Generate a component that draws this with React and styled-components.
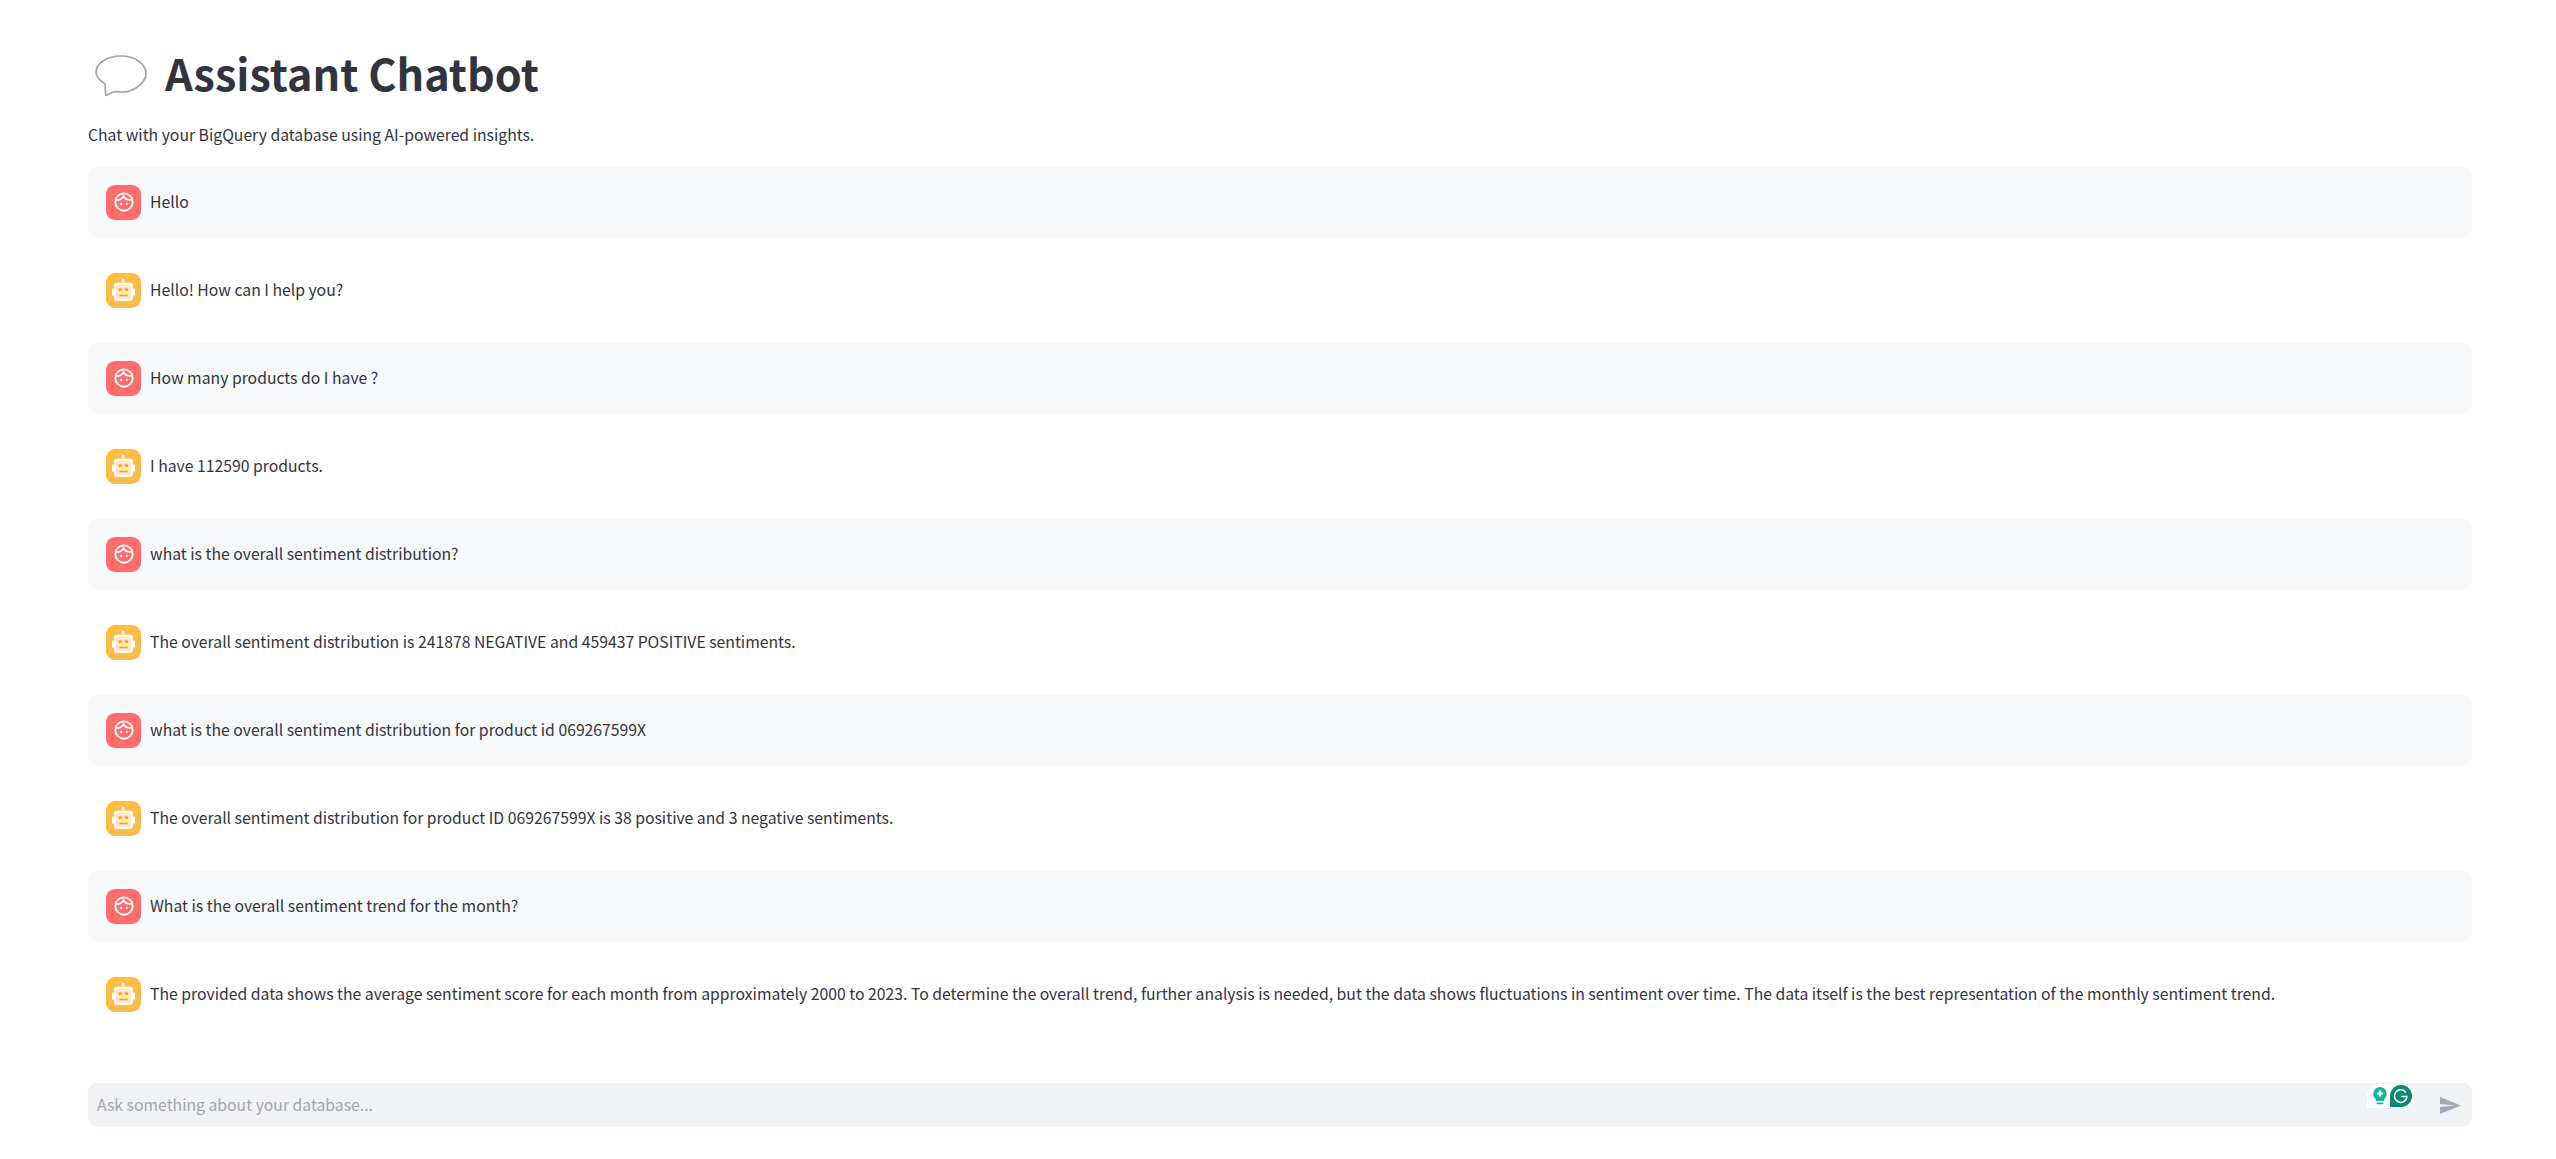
import React from "react";
import styled, { createGlobalStyle } from "styled-components";

const Global = createGlobalStyle`
  html, body { margin: 0; padding: 0; background: #fff; }
  body { font-family: "Noto Sans CJK SC", "Noto Sans", sans-serif; color: #31333f; }
`;
const Page = styled.main`
  width: 2556px; height: 1159px; box-sizing: border-box; overflow: hidden;
  padding: 42px 84px 0 88px; display: flex; flex-direction: column;
`;
const TitleRow = styled.header`
  display: flex; align-items: center; gap: 18px; height: 68px; padding-left: 7px;
`;
const Title = styled.h1`
  margin: 0; font-size: 43.2px; font-weight: 700; line-height: 60px; height: 68px; color: #31333f;
`;
const Subtitle = styled.p`
  margin: 11px 0 0; font-size: 15.75px; line-height: 28px; height: 29px; color: #31333f;
`;
const Messages = styled.section`
  display: flex; flex-direction: column; gap: 18px; margin-top: 17px;
`;
const Message = styled.article`
  display: flex; align-items: center; gap: 9px; height: 70px; box-sizing: border-box;
  padding: 0 18px; border-radius: 9px;
  background: ${(p) => (p.$user ? "#f7f8fa" : "transparent")};
`;
const Avatar = styled.div`
  width: 35px; height: 35px; flex: none; border-radius: 9px; display: flex;
  align-items: center; justify-content: center;
  background: ${(p) => (p.$user ? "#ff6c6c" : "#ffbd45")};
`;
const Text = styled.p`
  margin: 0; font-size: 15.75px; line-height: 28px; color: #31333f; white-space: nowrap;
`;
const InputBar = styled.form`
  position: relative; display: flex; align-items: center; justify-content: space-between;
  margin-top: 54px; height: 44px; border-radius: 9px; background: #f0f2f6; padding: 0 9px;
`;
const Placeholder = styled.span`
  font-size: 15.75px; color: #a3a5ad; line-height: 28px;
`;
const SendButton = styled.button`
  border: 0; background: none; padding: 0; margin: 0 2px 0 0; display: flex; cursor: pointer;
`;
const Grammarly = styled.div`
  position: absolute; right: 58px; top: 1px; width: 47px; height: 24px; box-sizing: border-box;
  display: flex; align-items: center; gap: 2px; padding: 0 1px 0 5px; background: #fff;
  border-radius: 12px 12px 12px 0;
`;

const BubbleIcon = () => (
  <svg width="52" height="42" viewBox="0 0 52 42" fill="none">
    <path d="M10 29 C4 25 1 21 1 17.500 C1 8 12 1 26 1 C40 1 51 9 51 18.500 C51 24 47 29 41 33 C36 36 31 37.500 26 37 C22 36.500 20 36.500 18 37 C15 38.500 13 40 11 40.500 C10 37 10.500 33 10 29 Z" stroke="#a2a2a2" strokeWidth="1.700" strokeLinejoin="round" />
  </svg>
);
const UserIcon = () => (
  <svg width="22" height="22" viewBox="0 0 24 24" fill="none" stroke="#fff" strokeWidth="2" strokeLinecap="round">
    <circle cx="12" cy="12" r="9.500" />
    <path d="M3.500 10 C7 10 10 8.500 11.500 5.500 C13 8.500 16.500 10 20.500 10" strokeWidth="1.800" />
    <circle cx="8.800" cy="14" r="1.300" fill="#fff" stroke="none" />
    <circle cx="15.200" cy="14" r="1.300" fill="#fff" stroke="none" />
  </svg>
);
const BotIcon = () => (
  <svg width="23" height="23" viewBox="0 0 22 22">
    <rect x="10" y="0.500" width="2" height="3" fill="#fff" />
    <circle cx="11" cy="1.500" r="1.500" fill="#fff" />
    <rect x="3" y="4.500" width="16" height="15.500" rx="1.500" fill="#ffe7ba" stroke="#fff" strokeWidth="2" />
    <rect x="0" y="9" width="2.500" height="7" rx="1" fill="#fff" />
    <rect x="19.500" y="9" width="2.500" height="7" rx="1" fill="#fff" />
    <circle cx="8" cy="10" r="1.500" fill="#f2a51f" />
    <circle cx="14" cy="10" r="1.500" fill="#f2a51f" />
    <rect x="7" y="15" width="8" height="1.500" fill="#f2a51f" />
  </svg>
);
const SendIcon = () => (
  <svg width="21" height="17" viewBox="0 0 21 17" fill="#a3a8b8">
    <path d="M0 0 L21 8.500 L0 17 L0 10 L15 8.500 L0 7 Z" />
  </svg>
);
const BulbIcon = () => (
  <svg width="16" height="20" viewBox="0 0 16 20">
    <path d="M8 1 A7 7 0 0 1 12 13.500 V15 H4 V13.500 A7 7 0 0 1 8 1 Z" fill="#11b99a" />
    <rect x="4.500" y="16.500" width="7" height="1.800" rx="0.900" fill="#11b99a" />
    <path d="M8 4.500 V10.500 M5 7.500 H11" stroke="#fff" strokeWidth="2" />
  </svg>
);
const GrammarlyIcon = () => (
  <svg width="22" height="22" viewBox="0 0 22 22" fill="none">
    <path d="M11 0 A11 11 0 0 1 11 22 H0 V11 A11 11 0 0 1 11 0 Z" fill="#0b8a72" />
    <path d="M15.500 7 A6.300 6.300 0 1 0 17 11.500 H12" stroke="#fff" strokeWidth="1.500" strokeLinecap="round" />
  </svg>
);

const chat = [
  "Hello",
  "Hello! How can I help you?",
  "How many products do I have ?",
  "I have 112590 products.",
  "what is the overall sentiment distribution?",
  "The overall sentiment distribution is 241878 NEGATIVE and 459437 POSITIVE sentiments.",
  "what is the overall sentiment distribution for product id 069267599X",
  "The overall sentiment distribution for product ID 069267599X is 38 positive and 3 negative sentiments.",
  "What is the overall sentiment trend for the month?",
  "The provided data shows the average sentiment score for each month from approximately 2000 to 2023. To determine the overall trend, further analysis is needed, but the data shows fluctuations in sentiment over time. The data itself is the best representation of the monthly sentiment trend.",
];

export default function App() {
  return (
    <Page>
      <Global />
      <TitleRow>
        <BubbleIcon />
        <Title>Assistant Chatbot</Title>
      </TitleRow>
      <Subtitle>Chat with your BigQuery database using AI-powered insights.</Subtitle>
      <Messages>
        {chat.map((text, i) => {
          const user = i % 2 === 0;
          return (
            <Message key={i} $user={user}>
              <Avatar $user={user}>{user ? <UserIcon /> : <BotIcon />}</Avatar>
              <Text>{text}</Text>
            </Message>
          );
        })}
      </Messages>
      <InputBar>
        <Placeholder>Ask something about your database...</Placeholder>
        <Grammarly><BulbIcon /><GrammarlyIcon /></Grammarly>
        <SendButton type="button"><SendIcon /></SendButton>
      </InputBar>
    </Page>
  );
}
